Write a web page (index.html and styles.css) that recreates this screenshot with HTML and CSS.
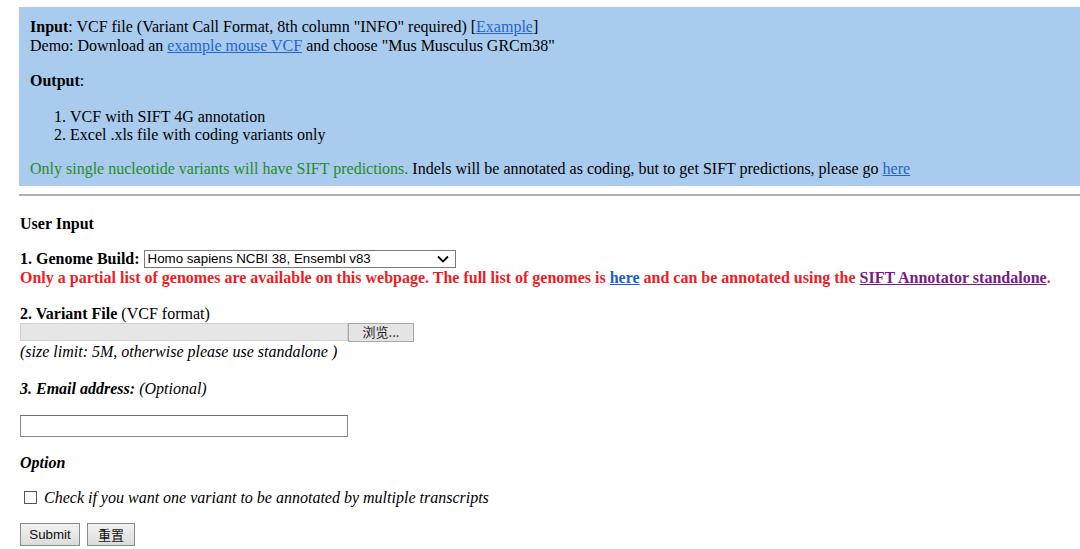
FILE: index.html
```html
<!DOCTYPE html>
<html>
<head>
<meta charset="utf-8">
<link rel="stylesheet" href="styles.css">
</head>
<body>
<div class="info">
  <p class="first"><b>Input</b>: VCF file (Variant Call Format, 8th column "INFO" required) [<a class="lnk" href="#">Example</a>]<br>
  Demo: Download an <a class="lnk" href="#">example mouse VCF</a> and choose "Mus Musculus GRCm38"</p>
  <p><b>Output</b>:</p>
  <ol class="outlist">
    <li>VCF with SIFT 4G annotation</li>
    <li>Excel .xls file with coding variants only</li>
  </ol>
  <p class="last"><span class="green">Only single nucleotide variants will have SIFT predictions.</span> Indels will be annotated as coding, but to get SIFT predictions, please go <a class="lnk" href="#">here</a></p>
</div>
<div class="rule"></div>
<form class="form">
  <div class="title">User Input</div>
  <div class="genome">
    <b>1. Genome Build:</b>
    <div class="select"><span>Homo sapiens NCBI 38, Ensembl v83</span>
      <svg width="12" height="8" viewBox="0 0 12 8"><path d="M1 1.5 L6 6.5 L11 1.5" fill="none" stroke="#000" stroke-width="1.8"/></svg>
    </div>
  </div>
  <div class="warn">Only a partial list of genomes are available on this webpage. The full list of genomes is <a class="blue" href="#">here</a> and can be annotated using the <a class="purple" href="#">SIFT Annotator standalone</a>.</div>
  <div class="variant"><b>2. Variant File</b> (VCF format)</div>
  <div class="file"><span class="field"></span><span class="browse">浏览...</span></div>
  <div class="note">(size limit: 5M, otherwise please use standalone )</div>
  <div class="email"><b>3. Email address:</b> (Optional)</div>
  <div class="emailrow"><span class="textbox"></span></div>
  <div class="option">Option</div>
  <label class="check"><span class="box"></span>Check if you want one variant to be annotated by multiple transcripts</label>
  <div class="buttons"><span class="btn submit">Submit</span><span class="btn reset">重置</span></div>
</form>
</body>
</html>
```
FILE: styles.css
```css
html, body {
  margin: 0;
  padding: 0;
  background: #fff;
  overflow: hidden;
}
body {
  padding: 7px 0 0 19px;
  font-family: "Liberation Serif", "Times New Roman", serif;
  font-size: 16px;
  line-height: 19px;
  color: #000;
}
.info {
  background: #a9cbee;
  padding: 10px 0 9px 11px;
  height: 160px;
  box-sizing: content-box;
}
.info p {
  margin: 16px 0 0 0;
}
.info p.first {
  margin-top: 0;
}
.outlist {
  margin: 18px 0 0 0;
  padding-left: 40px;
  line-height: 18px;
}
.info p.last {
  margin-top: 15px;
}
.lnk {
  color: #2266cc;
  text-decoration: underline;
}
.green {
  color: #2a8a2a;
}
.rule {
  margin-top: 8px;
  height: 2px;
  background: #b0b0b0;
}
.form {
  margin: 0;
  padding-left: 1px;
}
.title {
  font-weight: bold;
  margin-top: 18px;
}
.genome {
  margin-top: 16px;
  display: flex;
  align-items: center;
  gap: 4px;
  height: 19px;
}
.select {
  width: 312px;
  height: 18px;
  box-sizing: border-box;
  border: 1px solid #7a7a7a;
  background: #fff;
  display: flex;
  align-items: center;
  justify-content: space-between;
  padding: 0 6px 0 3px;
  font-family: "Liberation Sans", Arial, sans-serif;
  font-size: 13.3px;
  line-height: 16px;
}
.warn {
  color: #ee1c24;
  font-weight: bold;
  margin-top: 0;
  white-space: nowrap;
}
.blue {
  color: #1f5fbf;
}
.purple {
  color: #7a1a84;
}
.variant {
  margin-top: 17px;
}
.file {
  display: flex;
  height: 19px;
  margin-top: 0;
}
.field {
  width: 328px;
  height: 18px;
  box-sizing: border-box;
  background: #e6e6e6;
  border: 1px solid #d0d0d0;
}
.browse {
  width: 66px;
  height: 19px;
  box-sizing: border-box;
  background: #e4e4e4;
  border: 1px solid #a8a8a8;
  font-family: "Noto Sans CJK SC", "Liberation Sans", sans-serif;
  font-size: 13px;
  line-height: 16px;
  text-align: center;
  color: #222;
}
.note {
  font-style: italic;
  margin-top: 0;
}
.email {
  font-style: italic;
  margin-top: 18px;
}
.emailrow {
  margin-top: 17px;
  height: 22px;
}
.textbox {
  display: block;
  width: 328px;
  height: 22px;
  box-sizing: border-box;
  border: 1px solid #8a8a8a;
  border-top-color: #707070;
  background: #fff;
}
.option {
  font-weight: bold;
  font-style: italic;
  margin-top: 16px;
}
.check {
  display: flex;
  align-items: center;
  margin-top: 16px;
  font-style: italic;
  height: 19px;
}
.box {
  width: 13px;
  height: 13px;
  box-sizing: border-box;
  border: 1px solid #555;
  background: #fff;
  margin: 0 7px 0 4px;
}
.buttons {
  display: flex;
  gap: 7px;
  margin-top: 16px;
}
.btn {
  height: 23px;
  box-sizing: border-box;
  border: 1px solid #8a8a8a;
  background: linear-gradient(#f2f2f2, #dcdcdc);
  font-family: "Liberation Sans", Arial, sans-serif;
  font-size: 13.3px;
  line-height: 21px;
  text-align: center;
  color: #111;
}
.submit {
  width: 60px;
}
.reset {
  width: 48px;
  font-family: "Noto Sans CJK TC", "Liberation Sans", sans-serif;
  font-size: 13px;
}
```
